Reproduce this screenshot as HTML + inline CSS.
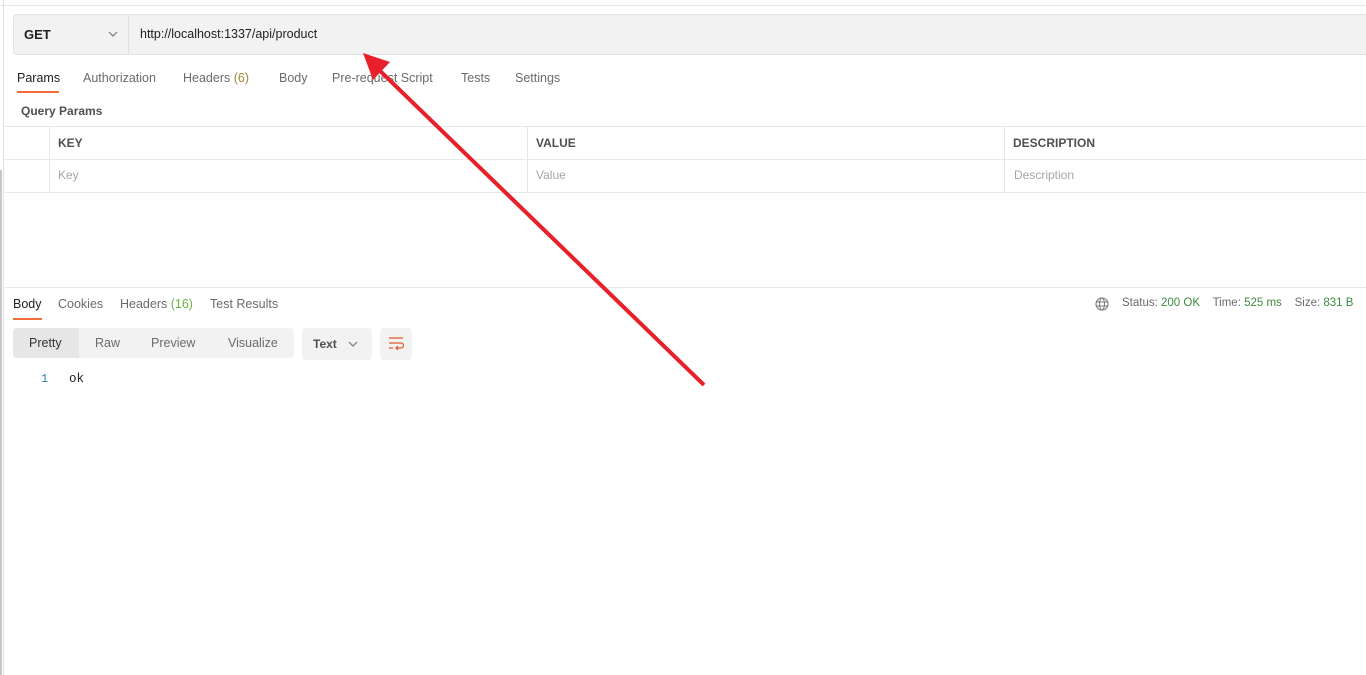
<!DOCTYPE html>
<html><head><style>
body{margin:0;width:1366px;height:675px;background:#fff;font-family:"Liberation Sans",sans-serif;position:relative;overflow:hidden;color:#212121}
.a{position:absolute}
.t{font-size:12.5px;color:#6b6b6b}
</style></head><body>
<div class="a" style="left:0;top:0;width:1366px;height:5px;border-bottom:1px solid #e6e6e6"></div>
<div class="a" style="left:3px;top:0;width:1px;height:675px;background:#e0e0e0"></div>
<div class="a" style="left:0;top:170px;width:2px;height:505px;background:#c8c8c8"></div>
<div class="a" style="left:13px;top:14px;width:1360px;height:39px;background:#f2f2f2;border:1px solid #e3e3e3;border-radius:4px"></div>
<div class="a" style="left:128px;top:15px;width:1px;height:39px;background:#e0e0e0"></div>
<div class="a" style="left:24px;top:27px;font-size:13px;font-weight:bold;color:#212121">GET</div>
<svg class="a" style="left:108px;top:30px" width="10" height="8"><path d="M1 2l4 4 4-4" stroke="#777" fill="none" stroke-width="1.2"/></svg>
<div class="a" style="left:140px;top:27px;font-size:12.5px;color:#212121">http://localhost:1337/api/product</div>
<div class="a t" style="left:17px;top:71px;color:#212121">Params</div>
<div class="a" style="left:17px;top:91px;width:42px;height:2px;background:#f26b3a"></div>
<div class="a t" style="left:83px;top:71px">Authorization</div>
<div class="a t" style="left:183px;top:71px">Headers <span style="color:#a0863a">(6)</span></div>
<div class="a t" style="left:279px;top:71px">Body</div>
<div class="a t" style="left:332px;top:71px">Pre-request Script</div>
<div class="a t" style="left:461px;top:71px">Tests</div>
<div class="a t" style="left:515px;top:71px">Settings</div>
<div class="a" style="left:21px;top:104px;font-size:12px;font-weight:bold;color:#505050">Query Params</div>
<div class="a" style="left:5px;top:126px;width:1361px;height:1px;background:#e6e6e6"></div>
<div class="a" style="left:5px;top:159px;width:1361px;height:1px;background:#e6e6e6"></div>
<div class="a" style="left:5px;top:192px;width:1361px;height:1px;background:#e6e6e6"></div>
<div class="a" style="left:49px;top:126px;width:1px;height:66px;background:#e6e6e6"></div>
<div class="a" style="left:527px;top:126px;width:1px;height:66px;background:#e6e6e6"></div>
<div class="a" style="left:1004px;top:126px;width:1px;height:66px;background:#e6e6e6"></div>
<div class="a" style="left:58px;top:136px;font-size:12px;font-weight:bold;color:#505050">KEY</div>
<div class="a" style="left:536px;top:136px;font-size:12px;font-weight:bold;color:#505050">VALUE</div>
<div class="a" style="left:1013px;top:136px;font-size:12px;font-weight:bold;color:#505050">DESCRIPTION</div>
<div class="a" style="left:58px;top:168px;font-size:12px;color:#a6a6a6">Key</div>
<div class="a" style="left:536px;top:168px;font-size:12px;color:#a6a6a6">Value</div>
<div class="a" style="left:1014px;top:168px;font-size:12px;color:#a6a6a6">Description</div>
<div class="a" style="left:5px;top:287px;width:1361px;height:1px;background:#e6e6e6"></div>
<div class="a t" style="left:13px;top:297px;color:#212121">Body</div>
<div class="a" style="left:13px;top:318px;width:29px;height:2px;background:#f26b3a"></div>
<div class="a t" style="left:58px;top:297px">Cookies</div>
<div class="a t" style="left:120px;top:297px">Headers <span style="color:#6fae45">(16)</span></div>
<div class="a t" style="left:210px;top:297px">Test Results</div>
<svg class="a" style="left:1095px;top:297px" width="14" height="14"><circle cx="7" cy="7" r="6" fill="none" stroke="#777" stroke-width="1.1"/><ellipse cx="7" cy="7" rx="2.5" ry="6" fill="none" stroke="#777" stroke-width="1"/><path d="M1 5h12M1 9h12" stroke="#777"/></svg>
<div class="a" style="left:1122px;top:297px;font-size:11.5px;color:#6b6b6b">Status: <span style="color:#3f8a3f">200 OK</span>&nbsp;&nbsp;&nbsp; Time: <span style="color:#3f8a3f">525 ms</span>&nbsp;&nbsp;&nbsp; Size: <span style="color:#3f8a3f">831 B</span></div>
<div class="a" style="left:13px;top:328px;width:281px;height:30px;background:#f2f2f2;border-radius:4px"></div>
<div class="a" style="left:13px;top:328px;width:66px;height:30px;background:#e6e6e6;border-radius:4px 0 0 4px"></div>
<div class="a t" style="left:29px;top:336px;color:#333">Pretty</div>
<div class="a t" style="left:95px;top:336px">Raw</div>
<div class="a t" style="left:151px;top:336px">Preview</div>
<div class="a t" style="left:228px;top:336px">Visualize</div>
<div class="a" style="left:302px;top:328px;width:70px;height:32px;background:#f2f2f2;border-radius:4px"></div>
<div class="a" style="left:313px;top:337px;font-size:12px;font-weight:bold;color:#505050">Text</div>
<svg class="a" style="left:348px;top:340px" width="10" height="8"><path d="M1 2l4 4 4-4" stroke="#777" fill="none" stroke-width="1.2"/></svg>
<div class="a" style="left:380px;top:328px;width:32px;height:32px;background:#f2f2f2;border-radius:4px"></div>
<svg class="a" style="left:388px;top:336px" width="16" height="16"><path d="M1 2h14M1 7h12a2.5 2.5 0 0 1 0 5H8M10 10l-2 2 2 2M1 12h4" stroke="#e05a28" fill="none" stroke-width="1.2"/></svg>
<div class="a" style="left:41px;top:372px;font-family:'Liberation Mono',monospace;font-size:12px;color:#2f7fa8">1</div>
<div class="a" style="left:69px;top:372px;font-family:'Liberation Mono',monospace;font-size:12.5px;color:#212121">ok</div>
<svg class="a" style="left:0;top:0" width="1366" height="675"><line x1="704" y1="385" x2="375" y2="66" stroke="#e8202a" stroke-width="4"/><polygon points="363,53 390,62 373,80" fill="#e8202a"/></svg>
</body></html>
